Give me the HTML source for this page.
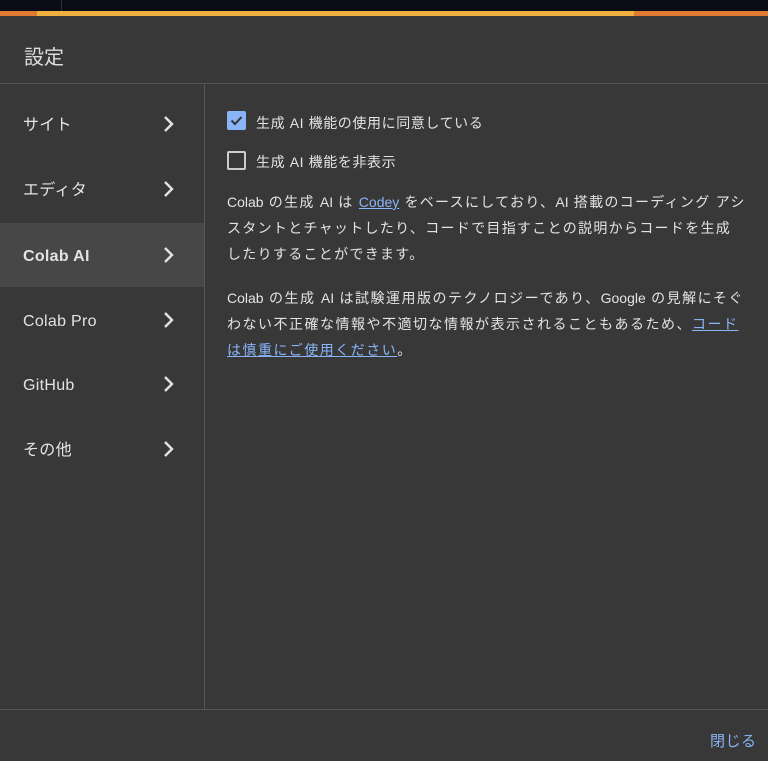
<!DOCTYPE html>
<html><head><meta charset="utf-8"><style>
body{margin:0;width:768px;height:761px;background:#383838;font-family:"Liberation Sans","Noto Sans CJK JP",sans-serif;color:#e3e3e3;position:relative;overflow:hidden}
.top{position:absolute;left:0;top:0;width:768px;height:11px;background:#0a0c18}
.top i{position:absolute;left:61px;top:0;width:1px;height:11px;background:#333}
.bar{position:absolute;top:11px;height:5px}
.h{position:absolute;left:24px;top:41px;font-size:20px;color:#ddd}
.hl{position:absolute;left:0;top:83px;width:768px;height:1px;background:#555}
.side{position:absolute;left:0;top:84px;width:204px;height:625px;border-right:1px solid #555}
.it{position:absolute;left:0;width:204px;height:64px;font-size:16px;line-height:68px;padding-left:23px;box-sizing:border-box;letter-spacing:0.3px}
.it.sel{background:#474747;font-weight:bold}
.it svg{position:absolute;left:162px;top:23px}
.cb{position:absolute;left:227px;width:19px;height:19px;border:2px solid #ccc;border-radius:2px;box-sizing:border-box}
.lab{position:absolute;left:256px;font-size:14px;letter-spacing:0.6px}
.p{position:absolute;left:227px;width:525px;font-size:14px;line-height:26px;letter-spacing:1.5px}
.p b{font-weight:normal;letter-spacing:0}
a{color:#8ab4f8;text-decoration:underline}
.fl{position:absolute;left:0;top:709px;width:768px;height:1px;background:#555}
.close{position:absolute;left:710px;top:730px;font-size:15px;color:#8ab4f8;letter-spacing:0.5px}
</style></head><body>
<div class="top"><i></i></div>
<div class="bar" style="left:0;width:768px;background:#e07a30"></div>
<div class="bar" style="left:37px;width:597px;background:#f0b040"></div>
<div class="h">設定</div>
<div class="hl"></div>
<div class="side">
<div class="it" style="top:8px">サイト<svg width="14" height="18" viewBox="0 0 14 18"><path d="M3 2l7 7-7 7" stroke="#e3e3e3" stroke-width="2.4" fill="none"/></svg></div>
<div class="it" style="top:73px">エディタ<svg width="14" height="18" viewBox="0 0 14 18"><path d="M3 2l7 7-7 7" stroke="#e3e3e3" stroke-width="2.4" fill="none"/></svg></div>
<div class="it sel" style="top:139px">Colab AI<svg width="14" height="18" viewBox="0 0 14 18"><path d="M3 2l7 7-7 7" stroke="#e3e3e3" stroke-width="2.4" fill="none"/></svg></div>
<div class="it" style="top:204px">Colab Pro<svg width="14" height="18" viewBox="0 0 14 18"><path d="M3 2l7 7-7 7" stroke="#e3e3e3" stroke-width="2.4" fill="none"/></svg></div>
<div class="it" style="top:268px">GitHub<svg width="14" height="18" viewBox="0 0 14 18"><path d="M3 2l7 7-7 7" stroke="#e3e3e3" stroke-width="2.4" fill="none"/></svg></div>
<div class="it" style="top:333px">その他<svg width="14" height="18" viewBox="0 0 14 18"><path d="M3 2l7 7-7 7" stroke="#e3e3e3" stroke-width="2.4" fill="none"/></svg></div>
</div>
<div class="cb" style="top:111px;background:#8ab4f8;border-color:#8ab4f8"><svg width="15" height="15" viewBox="0 0 15 15" style="position:absolute;left:0;top:0"><path d="M2.5 7.5l3.5 3.5 6.5-7" stroke="#333" stroke-width="2" fill="none"/></svg></div>
<div class="lab" style="top:113px">生成 AI 機能の使用に同意している</div>
<div class="cb" style="top:151px"></div>
<div class="lab" style="top:152px">生成 AI 機能を非表示</div>
<div class="p" style="top:189px;width:560px;letter-spacing:1.3px;white-space:nowrap"><b>Colab</b> の生成 <b>AI</b> は <a><b>Codey</b></a> をベースにしており、<b>AI</b> 搭載のコーディング アシ<br>スタントとチャットしたり、コードで目指すことの説明からコードを生成<br>したりすることができます。</div>
<div class="p" style="top:285px"><b>Colab</b> の生成 <b>AI</b> は試験運用版のテクノロジーであり、<b>Google</b> の見解にそぐわない不正確な情報や不適切な情報が表示されることもあるため、<a>コードは慎重にご使用ください</a>。</div>
<div class="fl"></div>
<div class="close">閉じる</div>
</body></html>
